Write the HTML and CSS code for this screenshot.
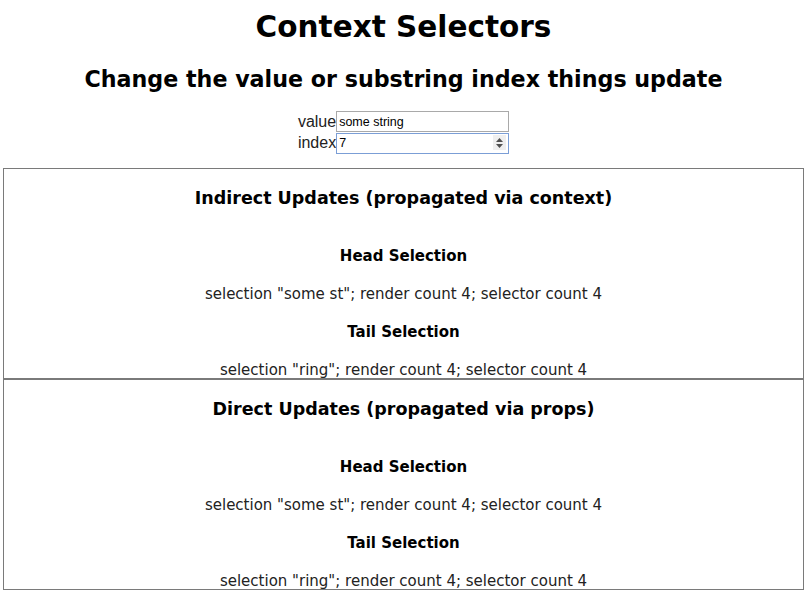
FILE: index.html
```html
<!DOCTYPE html>
<html>
<head>
<meta charset="utf-8">
<title>Context Selectors</title>
<link rel="stylesheet" href="styles.css">
</head>
<body>
<header class="intro">
  <h1 class="title">Context Selectors</h1>
  <h2 class="subtitle">Change the value or substring index things update</h2>
  <div class="form">
    <label class="label" for="value">value</label>
    <input class="field" id="value" type="text" value="some string">
    <label class="label" for="index">index</label>
    <span class="numwrap">
      <input class="field field-focus" id="index" type="text" value="7">
      <span class="spinner">
        <svg width="9" height="12" viewBox="0 0 9 12"><path d="M4.5 1 L8 5 L1 5 Z" fill="#505050"/><path d="M1 7 L8 7 L4.5 11 Z" fill="#505050"/></svg>
      </span>
    </span>
  </div>
</header>
<section class="panel">
  <h3 class="panel-title">Indirect Updates (propagated via context)</h3>
  <h4 class="sel-title first">Head Selection</h4>
  <p class="sel-text">selection "some st"; render count 4; selector count 4</p>
  <h4 class="sel-title">Tail Selection</h4>
  <p class="sel-text">selection "ring"; render count 4; selector count 4</p>
</section>
<section class="panel">
  <h3 class="panel-title">Direct Updates (propagated via props)</h3>
  <h4 class="sel-title first">Head Selection</h4>
  <p class="sel-text">selection "some st"; render count 4; selector count 4</p>
  <h4 class="sel-title">Tail Selection</h4>
  <p class="sel-text">selection "ring"; render count 4; selector count 4</p>
</section>
</body>
</html>
```
FILE: styles.css
```css
html, body {
  margin: 0;
  padding: 0;
  background: #ffffff;
}
body {
  font-family: "DejaVu Sans", Verdana, sans-serif;
  color: #000;
}
.intro {
  text-align: center;
  padding-top: 9px;
}
.title {
  margin: 0;
  font-size: 29.5px;
  line-height: 36px;
  font-weight: bold;
}
.subtitle {
  margin: 20px 0 0 0;
  font-size: 22.2px;
  line-height: 28px;
  font-weight: bold;
}
.form {
  display: grid;
  grid-template-columns: auto auto;
  justify-content: center;
  margin-top: 18px;
  margin-bottom: 15px;
}
.label {
  font-family: "Liberation Sans", Arial, sans-serif;
  font-size: 16px;
  line-height: 21px;
  text-align: right;
  color: #222;
}
.field {
  box-sizing: border-box;
  width: 173px;
  height: 21px;
  margin: 0;
  padding: 1px 2px;
  border: 1px solid #a9a9a9;
  font-family: "Liberation Sans", Arial, sans-serif;
  font-size: 12.5px;
  color: #000;
  background: #fff;
  outline: none;
}
.field-focus {
  border-color: #7b9ed6;
}
.numwrap {
  position: relative;
  display: block;
  width: 173px;
  height: 21px;
}
.spinner {
  position: absolute;
  right: 3px;
  top: 3px;
  width: 13px;
  height: 15px;
  background: #efefef;
  display: flex;
  align-items: center;
  justify-content: center;
}
.panel {
  box-sizing: border-box;
  height: 211px;
  margin: 0 3px;
  border: 1px solid #7a7a7a;
  overflow: hidden;
  text-align: center;
  padding-top: 17px;
}
.panel-title {
  margin: 0;
  font-size: 17.5px;
  line-height: 24px;
  font-weight: bold;
}
.sel-title {
  margin: 18px 0 0 0;
  font-size: 15px;
  line-height: 20px;
  font-weight: bold;
}
.sel-title.first {
  margin-top: 36px;
}
.sel-text {
  margin: 18px 0 0 0;
  font-size: 15px;
  line-height: 20px;
  color: #222;
}
```
